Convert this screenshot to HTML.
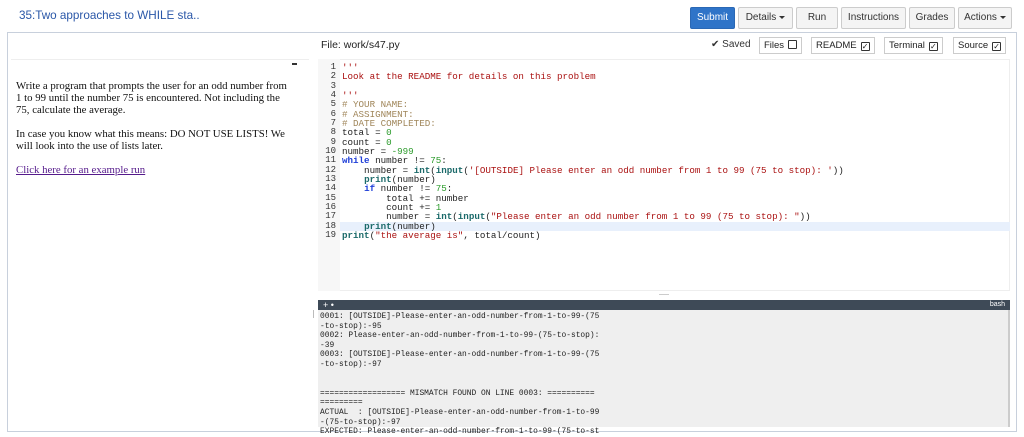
<!DOCTYPE html>
<html><head><meta charset="utf-8"><style>
body{margin:0;width:1024px;height:427px;overflow:hidden;background:#fff;font-family:"Liberation Sans",sans-serif;position:relative}
.a{position:absolute}
.title{left:19px;top:9px;font-size:11.7px;color:#2a57a8}
.btn{position:absolute;top:7px;height:22px;border:1px solid #ccc;background:#f4f4f4;font-size:10px;color:#333;box-sizing:border-box;text-align:center;line-height:20px;border-radius:2px}
.car{display:inline-block;border-left:3px solid transparent;border-right:3px solid transparent;border-top:3px solid #333;vertical-align:middle;margin-left:3px}
.main{left:7px;top:32px;width:1010px;height:400px;border:1px solid #c8d0dc;box-sizing:border-box}
.chk{position:absolute;top:37px;height:17px;border:1px solid #ccc;box-sizing:border-box;font-size:9.5px;line-height:15px;padding:0 4px;color:#222;background:#fff}
.bx{display:inline-block;width:7px;height:7px;border:1px solid #333;border-radius:1px;margin-left:4px;vertical-align:-1px;font-size:8px;line-height:7px;text-align:center}
.desc{left:16px;top:80px;width:274px;font-family:"Liberation Serif",serif;font-size:10.8px;line-height:12px;color:#111}
.desc p{margin:0 0 12px}
.ed{left:318px;top:59px;width:692px;height:232px;background:#fff;border:1px solid #eee;box-sizing:border-box}
.gut{left:318px;top:59px;width:22px;height:232px;background:#f7f7f7}
pre{margin:0;font-family:"Liberation Mono",monospace}
.code{left:342px;top:63px;font-size:9.2px;line-height:9.33px;color:#222}
.ln{left:318px;top:63px;width:18px;text-align:right;font-size:9px;line-height:9.33px;color:#333}
.s{color:#a11}.c{color:#a0865a}.n{color:#2a9a2a}.k{color:#1f3fd8;font-weight:bold}.b{color:#1b6a6a;font-weight:bold}
.term{left:318px;top:300px;width:692px;height:127px;background:#efefef;border-right:2px solid #ccc;box-sizing:border-box}
.th{left:318px;top:300px;width:692px;height:10px;background:#3e4a57;color:#fff;font-size:9px;line-height:10px}
.tt{left:320px;top:312px;font-size:7.9px;line-height:9.6px;color:#222}
</style></head><body>
<div class="a title">35:Two approaches to WHILE sta..</div>
<div class="btn" style="left:690px;width:45px;background:#2f74c8;border-color:#2a68b5;color:#fff">Submit</div>
<div class="btn" style="left:738px;width:55px">Details<span class="car"></span></div>
<div class="btn" style="left:796px;width:42px">Run</div>
<div class="btn" style="left:841px;width:65px">Instructions</div>
<div class="btn" style="left:909px;width:46px">Grades</div>
<div class="btn" style="left:958px;width:54px">Actions<span class="car"></span></div>
<div class="a main"></div>
<div class="a" style="left:11px;top:59px;width:298px;height:1px;background:#eee"></div>
<div class="a" style="left:292px;top:63px;width:5px;height:1.5px;background:#333"></div>
<div class="a" style="left:321px;top:39px;font-size:10.5px;color:#222">File: work/s47.py</div>
<div class="a" style="left:711px;top:39px;font-size:10px;color:#333">✔ Saved</div>
<div class="chk" style="left:759px">Files<span class="bx"></span></div>
<div class="chk" style="left:811px">README<span class="bx">✓</span></div>
<div class="chk" style="left:884px">Terminal<span class="bx">✓</span></div>
<div class="chk" style="left:953px">Source<span class="bx">✓</span></div>
<div class="a desc"><p>Write a program that prompts the user for an odd number from 1 to 99 until the number 75 is encountered. Not including the 75, calculate the average.</p><p>In case you know what this means: DO NOT USE LISTS! We will look into the use of lists later.</p><p style="color:#551a8b;text-decoration:underline">Click here for an example run</p></div>
<div class="a ed"></div><div class="a gut"></div>
<div class="a" style="left:340px;top:222px;width:670px;height:9px;background:#e8f0fc"></div>
<pre class="a ln">1
2
3
4
5
6
7
8
9
10
11
12
13
14
15
16
17
18
19</pre>
<pre class="a code"><span class="s">'''</span>
<span class="s">Look at the README for details on this problem</span>

<span class="s">'''</span>
<span class="c"># YOUR NAME:</span>
<span class="c"># ASSIGNMENT:</span>
<span class="c"># DATE COMPLETED:</span>
total = <span class="n">0</span>
count = <span class="n">0</span>
number = <span class="n">-999</span>
<span class="k">while</span> number != <span class="n">75</span>:
    number = <span class="b">int</span>(<span class="b">input</span>(<span class="s">'[OUTSIDE] Please enter an odd number from 1 to 99 (75 to stop): '</span>))
    <span class="b">print</span>(number)
    <span class="k">if</span> number != <span class="n">75</span>:
        total += number
        count += <span class="n">1</span>
        number = <span class="b">int</span>(<span class="b">input</span>(<span class="s">"Please enter an odd number from 1 to 99 (75 to stop): "</span>))
    <span class="b">print</span>(number)
<span class="b">print</span>(<span class="s">"the average is"</span>, total/count)</pre>
<div class="a" style="left:659px;top:294px;width:10px;height:1px;background:#ccc"></div>
<div class="a term"></div>
<div class="a th"><span style="margin-left:5px">+ •</span><span style="position:absolute;right:5px;font-size:7px">bash</span></div>
<div class="a" style="left:313px;top:310px;width:1px;height:8px;background:#bbb"></div>
<pre class="a tt">0001: [OUTSIDE]-Please-enter-an-odd-number-from-1-to-99-(75
-to-stop):-95
0002: Please-enter-an-odd-number-from-1-to-99-(75-to-stop):
-39
0003: [OUTSIDE]-Please-enter-an-odd-number-from-1-to-99-(75
-to-stop):-97


================== MISMATCH FOUND ON LINE 0003: ==========
=========
ACTUAL  : [OUTSIDE]-Please-enter-an-odd-number-from-1-to-99
-(75-to-stop):-97
EXPECTED: Please-enter-an-odd-number-from-1-to-99-(75-to-st</pre>
</body></html>
